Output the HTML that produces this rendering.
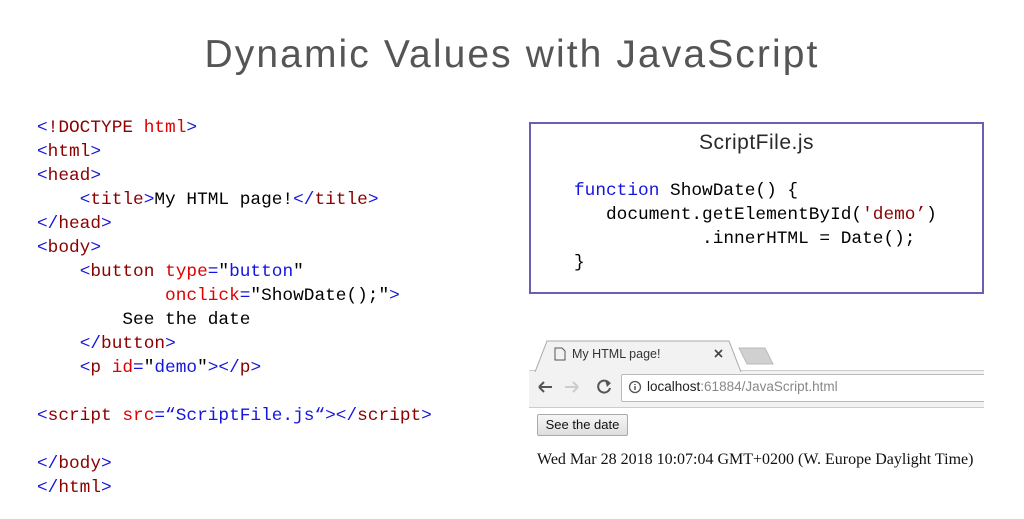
<!DOCTYPE html>
<html><head><style>
body{margin:0;width:1024px;height:519px;background:#fff;position:relative;overflow:hidden;font-family:"Liberation Sans",sans-serif}
.t{position:absolute;left:0;width:1024px;top:33px;text-align:center;font-size:39px;color:#555;letter-spacing:2.1px}
pre{margin:0;position:absolute;font-family:"Liberation Mono",monospace;font-size:17.8px;line-height:24px;color:#000}
.b{color:#1515e0}.m{color:#8b0000}.r{color:#e00000}
.box{position:absolute;left:529px;top:122px;width:451px;height:168px;border:2px solid #6a5fb5}
.bt{position:absolute;left:0;width:100%;top:7px;text-align:center;font-size:21px;color:#2a2a2a;letter-spacing:0.5px}
</style></head><body>
<div class="t">Dynamic Values with JavaScript</div>
<pre style="left:37px;top:116px"><span class="b">&lt;</span><span class="m">!DOCTYPE</span> <span class="r">html</span><span class="b">&gt;</span>
<span class="b">&lt;</span><span class="m">html</span><span class="b">&gt;</span>
<span class="b">&lt;</span><span class="m">head</span><span class="b">&gt;</span>
    <span class="b">&lt;</span><span class="m">title</span><span class="b">&gt;</span>My HTML page!<span class="b">&lt;/</span><span class="m">title</span><span class="b">&gt;</span>
<span class="b">&lt;/</span><span class="m">head</span><span class="b">&gt;</span>
<span class="b">&lt;</span><span class="m">body</span><span class="b">&gt;</span>
    <span class="b">&lt;</span><span class="m">button</span> <span class="r">type</span><span class="b">=</span>"<span class="b">button</span>"
            <span class="r">onclick</span><span class="b">=</span>"ShowDate();"<span class="b">&gt;</span>
        See the date
    <span class="b">&lt;/</span><span class="m">button</span><span class="b">&gt;</span>
    <span class="b">&lt;</span><span class="m">p</span> <span class="r">id</span><span class="b">=</span>"<span class="b">demo</span>"<span class="b">&gt;&lt;/</span><span class="m">p</span><span class="b">&gt;</span>

<span class="b">&lt;</span><span class="m">script</span> <span class="r">src</span><span class="b">=“ScriptFile.js“&gt;&lt;/</span><span class="m">script</span><span class="b">&gt;</span>

<span class="b">&lt;/</span><span class="m">body</span><span class="b">&gt;</span>
<span class="b">&lt;/</span><span class="m">html</span><span class="b">&gt;</span></pre>
<div class="box"><div class="bt">ScriptFile.js</div></div>
<pre style="left:574px;top:179px"><span class="b">function</span> ShowDate() {
   document.getElementById(<span class="m">'demo’</span>)
            .innerHTML = Date();
}</pre>
<div style="position:absolute;left:529px;top:370px;width:455px;height:36px;background:#f2f2f2;border-top:1px solid #ccc;border-bottom:1px solid #ccc"></div>
<svg style="position:absolute;left:529px;top:336px" width="250" height="36"><path d="M6 36 L18 5 L200 5 L212 36" fill="#f2f2f2" stroke="#aaa"/><path d="M210 12 L236 12 L244 28 L218 28Z" fill="#d0d0d0" stroke="#bbb"/><path d="M26 12h7l3 3v9h-10z" fill="none" stroke="#555"/><path d="M186 14l7 7M193 14l-7 7" stroke="#444" stroke-width="1.6"/></svg>
<div style="position:absolute;left:572px;top:347px;font-size:12.5px;color:#333">My HTML page!</div>
<svg style="position:absolute;left:535px;top:376px" width="90" height="24"><path d="M4 11h13M4 11l5-5M4 11l5 5" stroke="#555" stroke-width="2" fill="none"/><path d="M30 11h13M43 11l-5-5M43 11l-5 5" stroke="#ccc" stroke-width="2" fill="none"/><path d="M74 7a6 6 0 1 0 1 5" stroke="#555" stroke-width="2" fill="none"/><path d="M70 4l6 3-4 4z" fill="#555"/></svg>
<div style="position:absolute;left:621px;top:374px;width:370px;height:26px;background:#fff;border:1px solid #bbb;border-radius:2px"></div>
<svg style="position:absolute;left:628px;top:380px" width="14" height="14"><circle cx="7" cy="7" r="5.5" fill="none" stroke="#555" stroke-width="1.3"/><path d="M7 6v4M7 4v1" stroke="#555" stroke-width="1.5"/></svg>
<div style="position:absolute;left:647px;top:379px;font-size:13.5px;color:#222">localhost<span style="color:#888">:61884/JavaScript.html</span></div>
<div style="position:absolute;left:984px;top:360px;width:40px;height:60px;background:#fff"></div>
<div style="position:absolute;left:537px;top:414px;width:89px;height:20px;border:1px solid #aaa;border-radius:2px;background:linear-gradient(#f6f6f6,#dedede);font-size:13px;line-height:20px;text-align:center;color:#111">See the date</div>
<div style="position:absolute;left:537px;top:451px;font-family:'Liberation Serif',serif;font-size:16px;color:#111">Wed Mar 28 2018 10:07:04 GMT+0200 (W. Europe Daylight Time)</div>
</body></html>
